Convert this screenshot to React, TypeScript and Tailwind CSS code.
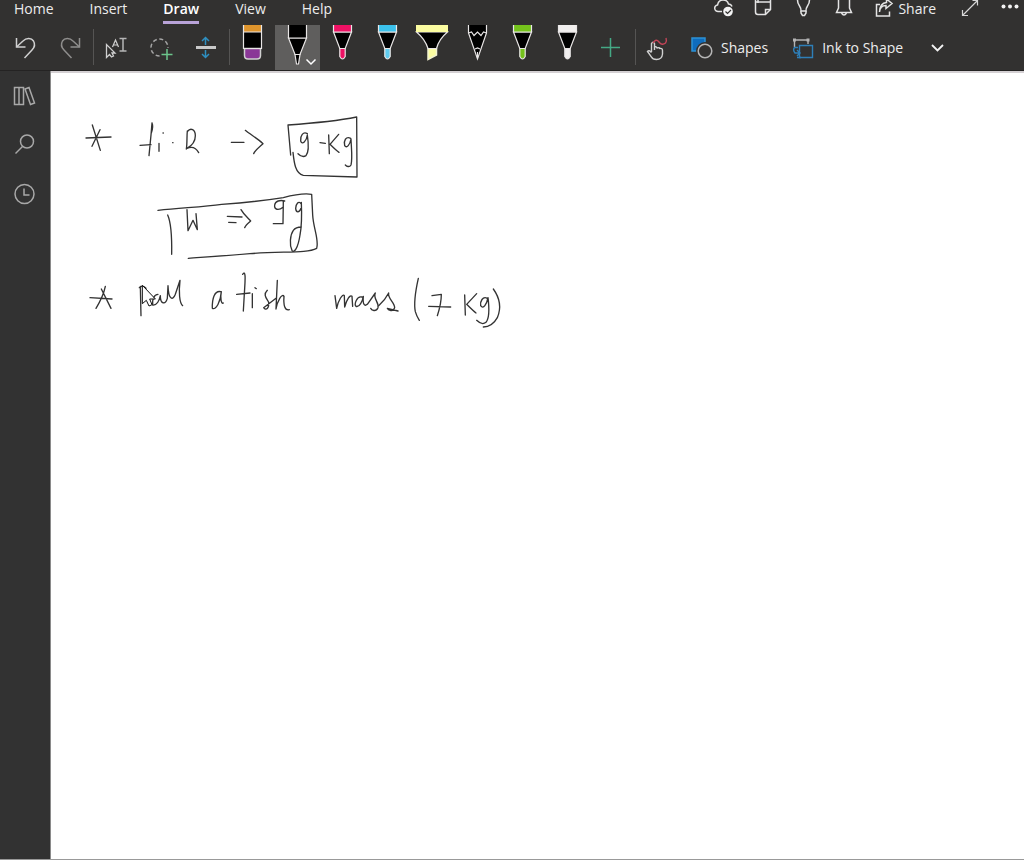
import React from "react";

const tabs = ["Home", "Insert", "Draw", "View", "Help"];

function ToolButton({
  label,
  active,
  children,
}: {
  label: string;
  active?: boolean;
  children: React.ReactNode;
}) {
  return (
    <button
      type="button"
      aria-label={label}
      title={label}
      className={`h-[45px] w-[45px] shrink-0 ${active ? "bg-[#5f5e5d]" : "hover:bg-[#484644]"}`}
    >
      <svg width="45" height="45" viewBox="0 0 45 45" fill="none" stroke="#d0d0d0" strokeWidth="1.5">
        {children}
      </svg>
    </button>
  );
}

function Divider() {
  return <span className="mt-1 h-9 w-px shrink-0 bg-[#555453]" />;
}

function Pen({ cap, tip }: { cap: string; tip: string }) {
  return (
    <g stroke="#e9e6e6" strokeWidth="1.2">
      <path d="M19.8 23v8.5q2.7 5 5.4 0V23z" fill={tip} />
      <path d="M13.5 7L19.8 23.5h5.4L31.5 7z" fill="#000" />
      <path d="M13 0h19v7H13z" fill={cap} stroke="none" />
      <path d="M13.5 0v7h18V0" />
    </g>
  );
}

function TopAction({
  label,
  children,
}: {
  label: string;
  children: React.ReactNode;
}) {
  return (
    <button type="button" aria-label={label} title={label} className="flex w-10 justify-center">
      <svg width="20" height="18" viewBox="0 0 20 18" fill="none" stroke="#e4e4e4" strokeWidth="1.5">
        {children}
      </svg>
    </button>
  );
}

function TitleRow() {
  return (
    <div className="flex h-[25px] items-start justify-between">
      <nav className="flex gap-9 pl-3.5">
        {tabs.map((tab) => (
          <a
            key={tab}
            href={`#${tab.toLowerCase()}`}
            className={`h-6 border-b-[3px] leading-[18px] ${
              tab === "Draw" ? "border-[#b9a3d8] font-semibold text-white" : "border-transparent"
            }`}
          >
            {tab}
          </a>
        ))}
      </nav>
      <div className="flex items-start">
        <TopAction label="Sync status">
          <path d="M8 11.500H4.500A3.200 3.200 0 0 1 3.500 5Q4.500 0 9 0Q13.500 0 14.500 4Q17 4 18 6.500" />
          <circle cx="14" cy="11.500" r="4.800" fill="#f3f3f3" stroke="none" />
          <path d="M11.500 11.500l2 2 3.500-3.500" stroke="#323130" strokeWidth="1.200" />
        </TopAction>
        <TopAction label="Feed">
          <path d="M1.500 0v12q0 2.500 2.500 2.500H11.500L16.500 9.500V0M4 0v3M1.500 2h15" />
          <path d="M11.500 14V9.500h5" />
        </TopAction>
        <TopAction label="Tell me">
          <path d="M3.500 0Q3.500 3.500 5.500 6Q7 8 7 11h5Q12 8 13.500 6Q15.500 3.500 15.500 0" />
          <path d="M7 11v2l1.500 2.500h2L12 13v-2" />
        </TopAction>
        <TopAction label="Notifications">
          <path d="M4.500 0v8L2.500 12.500h15L15.500 8V0" />
          <path d="M7.500 13q2.500 4 5 0" />
        </TopAction>
        <button type="button" className="ml-2.5 flex items-start gap-1 leading-[18px]">
          <svg width="20" height="18" viewBox="0 0 20 18" fill="none" stroke="#e4e4e4" strokeWidth="1.500">
            <path d="M6 4.500H2.500V16h13v-4.500" />
            <path d="M5.500 12Q6 5.500 12 5.500V8.500L18 3.500L12.500 -1V2.500Q6 3 5.500 12z" />
          </svg>
          Share
        </button>
        <button type="button" aria-label="Full screen" className="ml-6">
          <svg width="20" height="18" viewBox="0 0 20 18" fill="none" stroke="#d6d6d6" strokeWidth="1.200">
            <path d="M2.500 15.500L17.500 .5M2.500 10v5.500H8M12.500 .5h5v5" />
          </svg>
        </button>
        <button type="button" aria-label="More options" className="ml-5 pr-1">
          <svg width="20" height="16" viewBox="0 0 20 16" fill="#f3f3f3">
            <circle cx="3.500" cy="6.500" r="2" />
            <circle cx="10" cy="6.500" r="2" />
            <circle cx="16.500" cy="6.500" r="2" />
          </svg>
        </button>
      </div>
    </div>
  );
}

function DrawRibbon() {
  return (
    <div className="flex h-[45px] pl-[3px]">
      <ToolButton label="Undo">
        <path d="M13.500 13v9h9" />
        <path d="M13.500 22L20 16C23.500 12.500 28.500 13 30.500 16C32.500 19.500 31.500 22.500 29 25L21.500 33" />
      </ToolButton>
      <ToolButton label="Redo">
        <g stroke="#8f8e8d">
          <path d="M31.500 13v9h-9" />
          <path d="M31.500 22L25 16C21.500 12.500 16.500 13 14.500 16C12.500 19.500 13.500 22.500 16 25L23.500 33" />
        </g>
      </ToolButton>
      <Divider />
      <ToolButton label="Select objects or type text">
        <path d="M12.500 19.500V32.500L15.500 29.500L17.500 32L19.500 31L18 28H21z" strokeWidth="1.300" />
        <path d="M18.500 22L21.500 15L24.500 22M19.500 20h4" strokeWidth="1.200" />
        <path d="M25.500 13.500h7M29 14v12M25.500 26h7" stroke="#b5b5b5" />
      </ToolButton>
      <ToolButton label="Lasso select">
        <circle cx="20.500" cy="22.500" r="8.500" stroke="#a5a5a5" strokeDasharray="4 2.600" />
        <path d="M22 23h13v11H22z" fill="#323130" stroke="none" />
        <path d="M28 24v11M22.500 29.500h11" stroke="#6cc58b" />
      </ToolButton>
      <ToolButton label="Insert or remove space">
        <path d="M21.500 20v-7M18 16l3.500-3.500L25 16M21.500 25v7M18 29l3.500 3.500L25 29" stroke="#2e8fc0" />
        <path d="M12 22.500h20" stroke="#c9c9c9" strokeWidth="3" />
      </ToolButton>
      <Divider />
      <ToolButton label="Eraser">
        <path d="M13.500 0h18v7h-18z" fill="#de942c" stroke="none" />
        <path d="M13.500 7h18v16.500h-18z" fill="#000" stroke="none" />
        <path d="M14.500 23.500h16v7q0 3.500-3.500 3.500h-9q-3.500 0-3.500-3.500z" fill="#8a3797" />
        <path d="M13.500 0v23.500h18V0M13.500 7h18" stroke="#e9e6e6" strokeWidth="1.200" />
      </ToolButton>
      <ToolButton label="Black pen" active>
        <g stroke="#e9e6e6" strokeWidth="1.200">
          <path d="M20 29.500L21.500 39h2L25 29.500z" fill="#000" />
          <path d="M13.500 13L20 29.500h5L31.500 13z" fill="#000" />
          <path d="M13.500 0h18v13h-18z" fill="#000" stroke="none" />
          <path d="M13.500 0v13h18V0" />
        </g>
        <path d="M31.500 34.500l4.500 4.500 4.500-4.500" stroke="#fff" />
      </ToolButton>
      <ToolButton label="Pink pen">
        <Pen cap="#ee1164" tip="#ee1164" />
      </ToolButton>
      <ToolButton label="Light blue pen">
        <Pen cap="#3bc1eb" tip="#60ccef" />
      </ToolButton>
      <ToolButton label="Yellow highlighter">
        <path d="M18 23.500V34.500L26.500 30V23.500z" fill="#fbfca0" stroke="#f2f2cf" />
        <path d="M6.500 7Q15 14 18 23.500h8.500Q29 14 37.500 7z" fill="#000" stroke="#e9e6e6" strokeWidth="1.200" />
        <path d="M6 0h32v7H6z" fill="#fbfca0" stroke="none" />
      </ToolButton>
      <ToolButton label="Pencil">
        <g stroke="#e9e6e6" strokeWidth="1.200">
          <path d="M13.500 0v8L22.500 34L31.500 8V0" fill="#000" />
          <path d="M13.500 8L16.500 7L19 10.500L22.500 7L26 10.500L28.500 7L31.500 8M20 24l2.500-1 2.500 1" />
          <path d="M22.500 27v6" />
        </g>
      </ToolButton>
      <ToolButton label="Green pen">
        <Pen cap="#74c21b" tip="#74c21b" />
      </ToolButton>
      <ToolButton label="White pen">
        <Pen cap="#f1efee" tip="#f1efee" />
      </ToolButton>
      <ToolButton label="Add pen">
        <path d="M20.500 13v19M11 22.500h19" stroke="#45a985" />
      </ToolButton>
      <Divider />
      <ToolButton label="Draw with mouse or touch">
        <g strokeWidth="1.400">
          <path d="M15.500 27V18.500q1.500-2.500 3 0V25M18.500 22q2-1 2.800 1.500M21.300 23q2-1 2.700 1M24 23.500q2.500-.5 2.500 2V29Q26 34.500 20.500 34.500Q16.500 34.500 15.500 32L11.500 26.500Q13 24.500 15.500 27.500" />
          <path d="M17 18Q20 13 23 17Q26 21 29.500 18Q31 16 30 13" stroke="#c54458" />
        </g>
      </ToolButton>
      <button type="button" className="flex h-[45px] items-center gap-2 pr-3 pl-2.5 whitespace-nowrap">
        <svg width="22" height="22" viewBox="0 0 22 22" fill="none" strokeWidth="1.500">
          <path d="M1 1h13v13H1z" fill="#0f6cbd" stroke="#2c91d5" />
          <circle cx="14" cy="14" r="9" fill="#323130" stroke="none" />
          <circle cx="14" cy="14" r="6.800" stroke="#b5b5b5" />
        </svg>
        Shapes
      </button>
      <button type="button" className="flex h-[45px] items-center gap-2 px-3 whitespace-nowrap">
        <svg width="22" height="22" viewBox="0 0 22 22" fill="none" strokeWidth="1.400">
          <path d="M3 3h13M2.500 3v7M16 3v4" stroke="#b5b5b5" />
          <path d="M1 1.500h3v3H1zM14.500 1.500h3v3h-3z" fill="#b5b5b5" />
          <path d="M7.500 8.500h13v12h-13z" stroke="#2e7fb8" />
          <path d="M6 10.500H2.500Q.5 13 3 16H7M5 13l3 3-3 3M5 20.500h4" stroke="#2e7fb8" />
        </svg>
        Ink to Shape
      </button>
      <ToolButton label="More drawing tools">
        <path d="M17 20l5.500 5.500L28 20" stroke="#f3f3f3" strokeWidth="1.800" />
      </ToolButton>
    </div>
  );
}

function Sidebar() {
  return (
    <aside className="w-[51px] shrink-0 border-r border-[#8a8a8a] bg-[#323232]">
      <div className="flex flex-col items-center gap-1 pt-[2px] pr-1">
        <ToolButton label="Show notebooks">
          <g stroke="#a8a8a8">
            <path d="M13.500 14.500h4.500v17h-4.500zM18 14.500h4.500v17H18z" />
            <path d="M24 16l4-1.500L33.500 30l-4 1.500z" />
          </g>
        </ToolButton>
        <ToolButton label="Search">
          <circle cx="26" cy="19.500" r="6.500" stroke="#a8a8a8" />
          <path d="M21.500 24.500L14.500 31.500" stroke="#a8a8a8" />
        </ToolButton>
        <ToolButton label="Recent notes">
          <circle cx="23.500" cy="23" r="9.500" stroke="#a8a8a8" />
          <path d="M23 17.500V24h5.500" stroke="#a8a8a8" />
        </ToolButton>
      </div>
    </aside>
  );
}

// Pen strokes are stored at three units per page pixel.
function Ink() {
  return (
    <svg
      role="img"
      aria-label="* fi.R → g - Kg. W ⇒ 9g. * pull a fish mass (7 Kg)"
      width="480"
      height="280"
      viewBox="0 0 1440 840"
      fill="none"
      stroke="#333"
      strokeWidth="4"
      strokeLinecap="round"
      strokeLinejoin="round"
    >
      <g transform="translate(57 102)">
        <path d="M67 60L91 136M90 74L66 124M48 99L123 96" />
        <path d="M246 54L243 90L237 152M246 54C249 60 248 72 244 84M210 121L243 119M267 115V139M279 84h1M308 113h1" />
        <path d="M352 78C350 95 352 115 349 132M352 80C362 66 376 74 376 92C376 110 365 122 351 130C365 124 378 128 386 143" />
      </g>
      <g transform="translate(507 102)">
        <path d="M34 112H72M76 76C90 88 112 100 129 116C118 126 105 136 101 146" />
        <path d="M212 150L204 60C260 56 340 50 410 36L411 216L250 211C225 205 222 170 219 142" />
        <path d="M262 86C250 78 240 92 242 108C246 122 260 108 262 90C265 110 268 140 258 152C248 158 238 150 234 146M300 113L316 115" />
        <path d="M326 90L328 146M356 88L330 118C340 128 350 138 357 142M392 100C378 92 370 108 374 122C380 132 390 118 393 102C394 130 398 160 393 180C388 188 380 184 376 180" />
      </g>
      <g transform="translate(297 342)">
        <path d="M24 76C100 68 160 66 215 58C300 52 350 46 400 38C430 30 460 24 485 28L488 90C490 130 508 165 500 190C470 206 400 198 300 206C230 212 170 216 115 220" />
        <path d="M53 90C62 110 66 150 65 208M111 74L114 137L129 106L142 134L138 86" />
        <path d="M232 94L276 96M236 112L258 113M273 74C282 90 295 100 302 108C295 114 286 122 284 128" />
        <path d="M404 48C390 44 376 48 374 60C372 74 385 78 400 66M400 48L399 116L370 116" />
        <path d="M453 56C446 46 438 56 437 70C438 84 448 84 453 70M454 52C456 100 454 130 450 150C444 190 432 206 426 196C418 180 420 150 430 136C436 128 446 126 454 126" />
      </g>
      <g transform="translate(87 582)">
        <path d="M76 64C72 84 60 110 48 130M64 72L93 130M30 98L96 102" />
        <path d="M181 64L183 152M178 68C184 62 192 64 198 70" />
        <path d="M234 88C222 88 216 104 218 120C230 122 238 106 241 92C241 118 256 120 262 100L264 62C266 110 280 104 286 88L300 46C296 80 298 114 308 122" />
        <path d="M422 80C404 76 396 100 397 130C408 136 422 110 424 80C420 100 424 118 430 114" />
        <path d="M488 28C497 14 496 40 494 70L490 138M470 88L510 84M517 86V128M525 68l4 3" />
        <path d="M562 76C548 90 560 100 566 112C568 130 558 138 551 128L588 100M592 46L588 132C592 108 606 84 612 94C610 120 614 138 628 134" />
        {/* pointer */}
        <path d="M187 62V116L199 106L207 123L216 119L209 102H225z" fill="#fff" stroke="#111" strokeWidth="3" />
      </g>
      <g transform="translate(747 582)">
        <path d="M105 92L110 130C114 108 128 84 133 92L134 126C140 104 150 88 156 94L158 124" />
        <path d="M186 96C170 92 162 118 168 124C178 128 188 108 190 94C188 116 192 126 202 118L226 84C218 100 238 112 234 128C228 142 214 136 212 130" />
        <path d="M236 122C250 110 262 92 266 84C262 100 284 112 284 128C280 142 264 136 262 130L294 138" />
        <path d="M355 40C346 80 342 120 346 140C350 154 354 160 358 166M396 92L424 88C424 110 416 140 412 152M386 124L452 126" />
        <path d="M494 90L496 150M530 86L500 118C512 130 522 140 528 144M562 100C548 92 540 110 542 122C550 134 560 118 564 98C568 130 568 160 558 172C548 180 536 172 530 166" />
        <path d="M580 72C600 100 604 130 592 158C582 176 566 186 550 186" />
      </g>
    </svg>
  );
}

export default function App() {
  return (
    <div className="flex min-h-screen flex-col overflow-x-hidden border-b border-[#999] bg-white font-['Open_Sans','Noto_Sans',sans-serif] text-sm text-[#ededed]">
      <header className="border-b border-[#242323] bg-[#323130]">
        <TitleRow />
        <DrawRibbon />
      </header>
      <div className="flex flex-1">
        <Sidebar />
        <main className="min-w-0 flex-1 border-t-2 border-[#d4d0d3]">
          {/* the ink starts under the top edge of the page */}
          <div className="-mt-0.5">
            <Ink />
          </div>
        </main>
      </div>
    </div>
  );
}
